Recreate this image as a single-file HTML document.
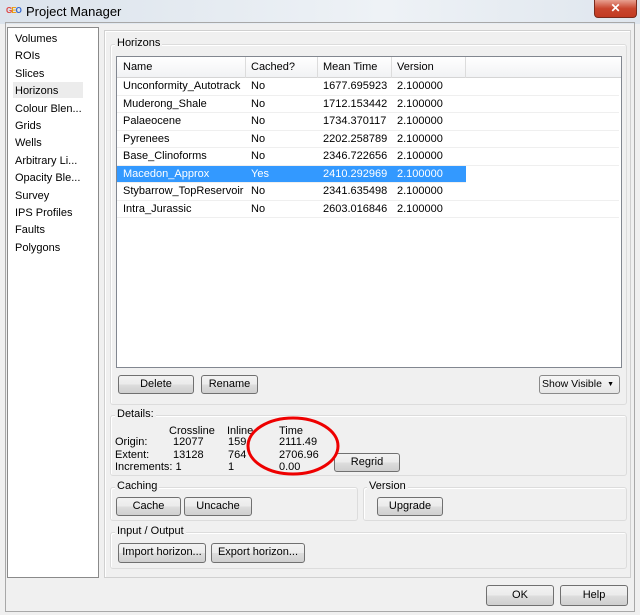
<!DOCTYPE html>
<html><head><style>
body{margin:0;width:640px;height:615px;overflow:hidden;background:#f0f0f0;font-family:"Liberation Sans",sans-serif;font-size:11px;color:#000;position:relative}
div{position:absolute;box-sizing:border-box}
.t{white-space:nowrap}
.lg{background:#f0f0f0;padding:0 2px}
.btn{border:1px solid #707070;border-radius:3px;background:linear-gradient(#f2f2f2,#ebebeb 50%,#dddddd 51%,#cfcfcf);text-align:center;line-height:17px}
.grp{border:1px solid #dcdcdc;border-radius:3px;box-shadow:inset 1px 1px 0 #fff}
.row{left:1px;width:502px;height:17.5px;border-bottom:1px solid #efefef;line-height:17px}
.row span{position:absolute;white-space:nowrap}
</style></head><body>
<div style="left:0;top:0;width:640px;height:24px;background:linear-gradient(90deg,#dbe3ec,#eef2f6 60%,#dfe6ee)"></div>
<div class="t" style="left:6px;top:6px;font-size:8px;font-weight:bold;color:#d44;letter-spacing:-1px">G<span style="color:#e90">E</span><span style="color:#36c">O</span></div>
<div class="t" style="left:26px;top:4px;font-size:13px">Project Manager</div>
<div style="left:594px;top:0;width:43px;height:18px;background:linear-gradient(#e8a090,#c9462e 50%,#c23a22);border:1px solid #7a2a1c;border-top:none;border-radius:0 0 4px 4px;color:#fff;text-align:center;font-weight:bold;font-size:12px;line-height:16px">✕</div>
<div style="left:5px;top:22px;width:630px;height:590px;border:1px solid #a8a8a8"></div>
<div style="left:7px;top:27px;width:92px;height:551px;background:#fff;border:1px solid #8a8a8a"></div>
<div style="left:13px;top:82px;width:70px;height:16px;background:#ececec"></div>
<div class="t" style="left:15px;top:31px;line-height:17.4px">Volumes<br>ROIs<br>Slices<br>Horizons<br>Colour Blen...<br>Grids<br>Wells<br>Arbitrary Li...<br>Opacity Ble...<br>Survey<br>IPS Profiles<br>Faults<br>Polygons</div>
<div style="left:104px;top:30px;width:527px;height:548px;border:1px solid #d0d0d0;box-shadow:inset 1px 1px 0 #fff"></div>
<div class="grp" style="left:110px;top:44px;width:517px;height:361px"></div>
<div class="t lg" style="left:115px;top:37px">Horizons</div>
<div style="left:116px;top:56px;width:506px;height:312px;background:#fff;border:1px solid #828790"></div>
<div style="left:117px;top:57px;width:504px;height:21px;background:linear-gradient(#fff,#f1f2f4);border-bottom:1px solid #d5d5d5"></div>
<div style="left:245px;top:57px;width:1px;height:21px;background:#dcdcdc"></div>
<div style="left:317px;top:57px;width:1px;height:21px;background:#dcdcdc"></div>
<div style="left:391px;top:57px;width:1px;height:21px;background:#dcdcdc"></div>
<div style="left:465px;top:57px;width:1px;height:21px;background:#dcdcdc"></div>
<div class="t" style="left:123px;top:61px">Name</div>
<div class="t" style="left:251px;top:61px">Cached?</div>
<div class="t" style="left:323px;top:61px">Mean Time</div>
<div class="t" style="left:397px;top:61px">Version</div>
<div style="left:116px;top:78px;width:506px;height:150px">
<div class="row" style="top:0"><span style="left:6px">Unconformity_Autotrack</span><span style="left:134px">No</span><span style="left:206px">1677.695923</span><span style="left:280px">2.100000</span></div>
<div class="row" style="top:17.5px"><span style="left:6px">Muderong_Shale</span><span style="left:134px">No</span><span style="left:206px">1712.153442</span><span style="left:280px">2.100000</span></div>
<div class="row" style="top:35px"><span style="left:6px">Palaeocene</span><span style="left:134px">No</span><span style="left:206px">1734.370117</span><span style="left:280px">2.100000</span></div>
<div class="row" style="top:52.5px"><span style="left:6px">Pyrenees</span><span style="left:134px">No</span><span style="left:206px">2202.258789</span><span style="left:280px">2.100000</span></div>
<div class="row" style="top:70px"><span style="left:6px">Base_Clinoforms</span><span style="left:134px">No</span><span style="left:206px">2346.722656</span><span style="left:280px">2.100000</span></div>
<div class="row" style="top:87.5px;width:349px;background:#3399ff;color:#fff"><span style="left:6px">Macedon_Approx</span><span style="left:134px">Yes</span><span style="left:206px">2410.292969</span><span style="left:280px">2.100000</span></div>
<div class="row" style="top:105px"><span style="left:6px">Stybarrow_TopReservoir</span><span style="left:134px">No</span><span style="left:206px">2341.635498</span><span style="left:280px">2.100000</span></div>
<div class="row" style="top:122.5px"><span style="left:6px">Intra_Jurassic</span><span style="left:134px">No</span><span style="left:206px">2603.016846</span><span style="left:280px">2.100000</span></div>
</div>
<div class="btn" style="left:118px;top:375px;width:76px;height:19px">Delete</div>
<div class="btn" style="left:201px;top:375px;width:57px;height:19px">Rename</div>
<div class="btn" style="left:539px;top:375px;width:81px;height:19px;text-align:left;padding-left:2px;font-size:10.5px;border-color:#8a8a8a;background:linear-gradient(#f6f6f6,#e6e6e6)">Show Visible<span style="position:absolute;right:5px;top:0;font-size:7px">▼</span></div>
<div class="grp" style="left:110px;top:415px;width:517px;height:61px"></div>
<div class="t lg" style="left:115px;top:408px">Details:</div>
<div class="t" style="left:169px;top:425px">Crossline</div>
<div class="t" style="left:227px;top:425px">Inline</div>
<div class="t" style="left:279px;top:425px">Time</div>
<div class="t" style="left:115px;top:436px;line-height:12.5px">Origin:<br>Extent:<br>Increments: 1</div>
<div class="t" style="left:173px;top:436px;line-height:12.5px">12077<br>13128</div>
<div class="t" style="left:228px;top:436px;line-height:12.5px">159<br>764<br>1</div>
<div class="t" style="left:279px;top:436px;line-height:12.5px">2111.49<br>2706.96<br>0.00</div>
<div class="btn" style="left:334px;top:453px;width:66px;height:19px">Regrid</div>
<svg style="position:absolute;left:244px;top:414px" width="100" height="66"><ellipse cx="49" cy="32" rx="45" ry="28" fill="none" stroke="#e00" stroke-width="3"/></svg>
<div class="grp" style="left:110px;top:487px;width:248px;height:34px"></div>
<div class="t lg" style="left:115px;top:480px">Caching</div>
<div class="btn" style="left:116px;top:497px;width:65px;height:19px">Cache</div>
<div class="btn" style="left:184px;top:497px;width:68px;height:19px">Uncache</div>
<div class="grp" style="left:363px;top:487px;width:264px;height:34px"></div>
<div class="t lg" style="left:367px;top:480px">Version</div>
<div class="btn" style="left:377px;top:497px;width:66px;height:19px">Upgrade</div>
<div class="grp" style="left:110px;top:532px;width:517px;height:37px"></div>
<div class="t lg" style="left:115px;top:525px">Input / Output</div>
<div class="btn" style="left:118px;top:543px;width:88px;height:20px">Import horizon...</div>
<div class="btn" style="left:211px;top:543px;width:94px;height:20px">Export horizon...</div>
<div class="btn" style="left:486px;top:585px;width:68px;height:21px;line-height:19px">OK</div>
<div class="btn" style="left:560px;top:585px;width:68px;height:21px;line-height:19px">Help</div>
</body></html>
